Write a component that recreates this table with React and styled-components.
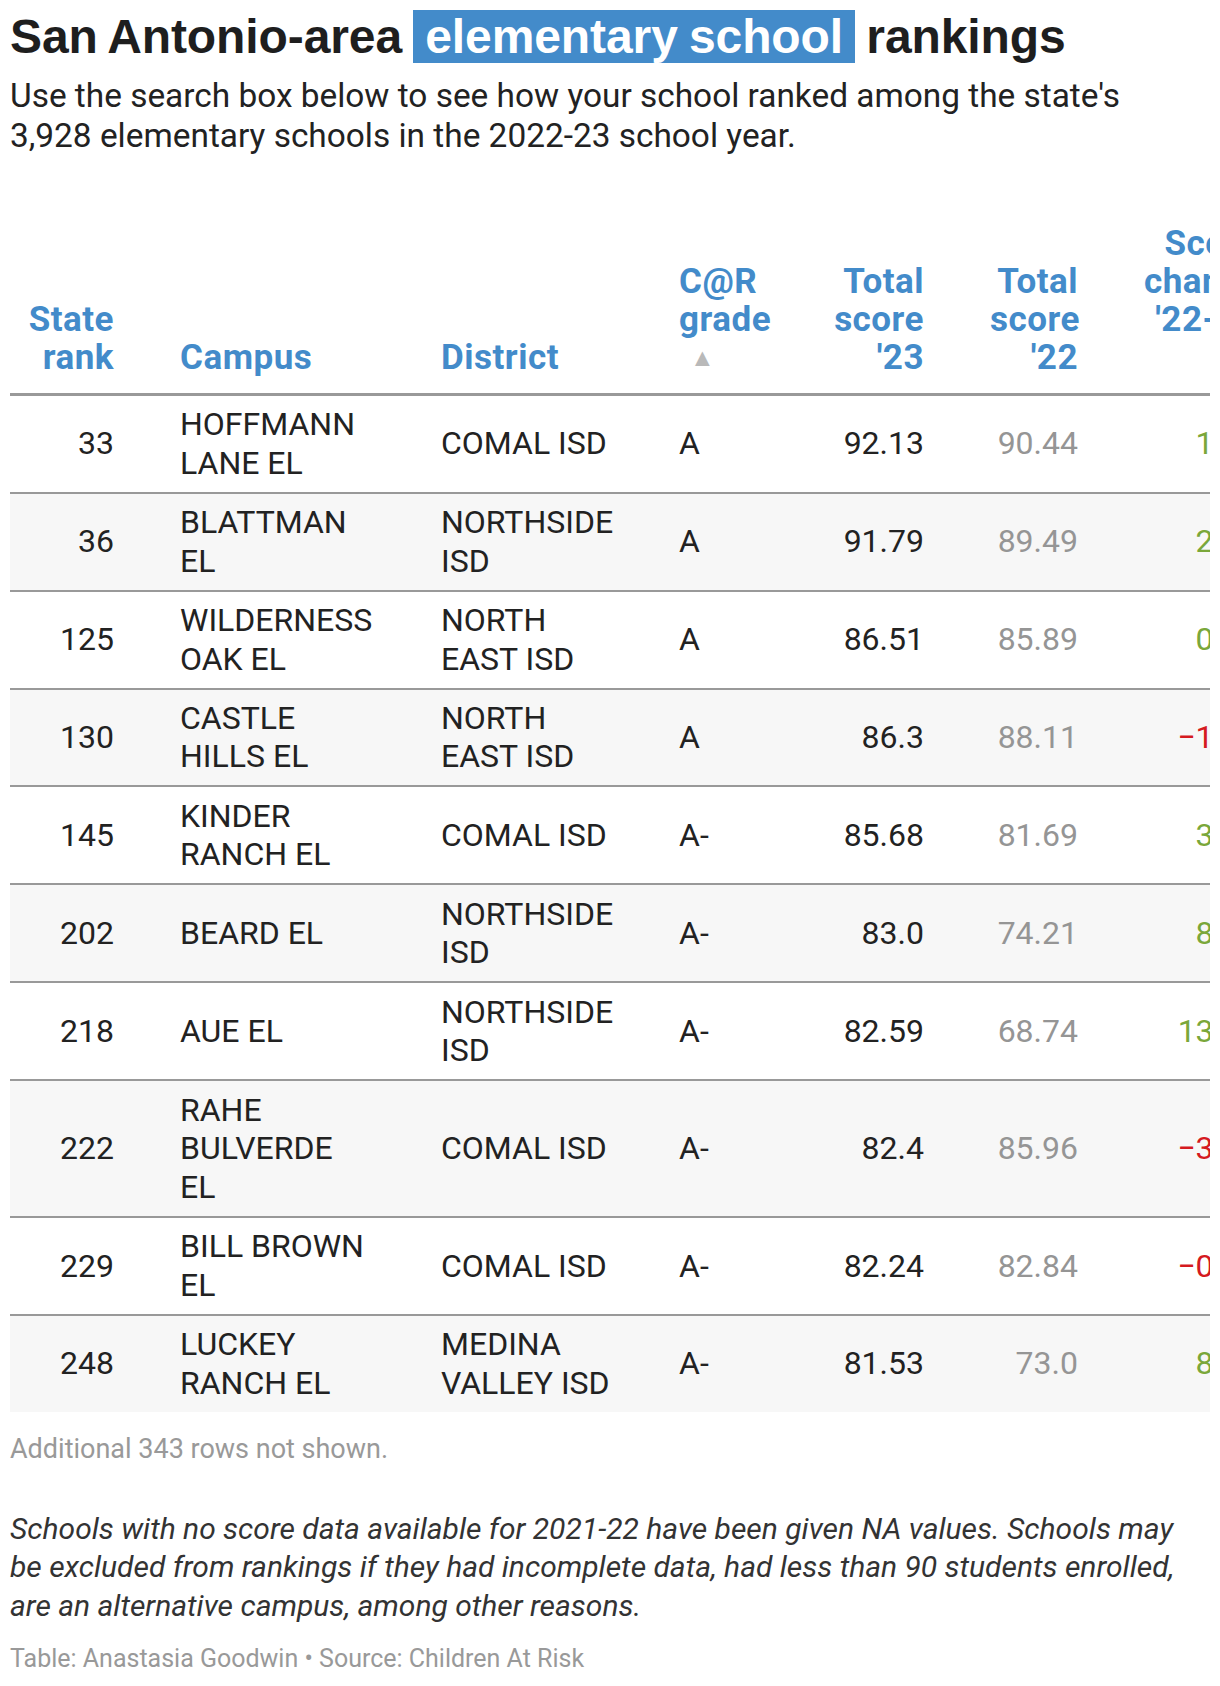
import styled, { createGlobalStyle } from "styled-components";

const GlobalStyle = createGlobalStyle`
  html, body {
    margin: 0;
    padding: 0;
    background: #fff;
  }
  body {
    font-family: Roboto, "Liberation Sans", sans-serif;
    color: #222;
  }
`;

const COLUMNS = [
  { key: "rank", label: "State\nrank", width: 137, align: "right" },
  { key: "campus", label: "Campus", width: 261, align: "left" },
  { key: "district", label: "District", width: 238, align: "left" },
  { key: "grade", label: "C@R\ngrade", width: 154, align: "left", sorted: true },
  { key: "score23", label: "Total\nscore\n'23", width: 157, align: "right" },
  { key: "score22", label: "Total\nscore\n'22", width: 154, align: "right" },
  { key: "change", label: "Score\nchange\n'22-23\n\u00a0", width: 180, align: "right" },
];

const ROWS = [
  { rank: 33, campus: "HOFFMANN\nLANE EL", district: "COMAL ISD", grade: "A", score23: "92.13", score22: "90.44", change: 1.69 },
  { rank: 36, campus: "BLATTMAN\nEL", district: "NORTHSIDE\nISD", grade: "A", score23: "91.79", score22: "89.49", change: 2.3 },
  { rank: 125, campus: "WILDERNESS\nOAK EL", district: "NORTH\nEAST ISD", grade: "A", score23: "86.51", score22: "85.89", change: 0.62 },
  { rank: 130, campus: "CASTLE\nHILLS EL", district: "NORTH\nEAST ISD", grade: "A", score23: "86.3", score22: "88.11", change: -1.81 },
  { rank: 145, campus: "KINDER\nRANCH EL", district: "COMAL ISD", grade: "A-", score23: "85.68", score22: "81.69", change: 3.99 },
  { rank: 202, campus: "BEARD EL", district: "NORTHSIDE\nISD", grade: "A-", score23: "83.0", score22: "74.21", change: 8.79 },
  { rank: 218, campus: "AUE EL", district: "NORTHSIDE\nISD", grade: "A-", score23: "82.59", score22: "68.74", change: 13.85 },
  { rank: 222, campus: "RAHE\nBULVERDE\nEL", district: "COMAL ISD", grade: "A-", score23: "82.4", score22: "85.96", change: -3.56 },
  { rank: 229, campus: "BILL BROWN\nEL", district: "COMAL ISD", grade: "A-", score23: "82.24", score22: "82.84", change: -0.6 },
  { rank: 248, campus: "LUCKEY\nRANCH EL", district: "MEDINA\nVALLEY ISD", grade: "A-", score23: "81.53", score22: "73.0", change: 8.53 },
];

const formatChange = (value) => {
  const text = Math.abs(value).toFixed(2);
  return value < 0 ? `\u2212${text}` : text;
};

function App() {
  return (
    <Page>
      <GlobalStyle />
      <Title>
        San Antonio-area <Highlight>elementary school</Highlight> rankings
      </Title>
      <Subtitle>
        Use the search box below to see how your school ranked among the state's
        <br />
        3,928 elementary schools in the 2022-23 school year.
      </Subtitle>

      <TableWrap>
        <Table>
          <colgroup>
            {COLUMNS.map((col) => (
              <col key={col.key} style={{ width: col.width }} />
            ))}
          </colgroup>
          <thead>
            <tr>
              {COLUMNS.map((col) => (
                <HeadCell key={col.key} $align={col.align}>
                  {col.label}
                  {col.sorted && <SortArrow>▲</SortArrow>}
                </HeadCell>
              ))}
            </tr>
          </thead>
          <tbody>
            {ROWS.map((row, i) => (
              <Row key={row.rank} $striped={i % 2 === 1}>
                <Cell $align="right">{row.rank}</Cell>
                <Cell>{row.campus}</Cell>
                <Cell>{row.district}</Cell>
                <Cell>{row.grade}</Cell>
                <Cell $align="right">{row.score23}</Cell>
                <Cell $align="right" $tone="muted">
                  {row.score22}
                </Cell>
                <Cell $align="right" $tone={row.change < 0 ? "down" : "up"}>
                  {formatChange(row.change)}
                </Cell>
              </Row>
            ))}
          </tbody>
        </Table>
      </TableWrap>

      <MoreRows>Additional 343 rows not shown.</MoreRows>
      <Note>
        Schools with no score data available for 2021-22 have been given NA values. Schools may
        <br />
        be excluded from rankings if they had incomplete data, had less than 90 students enrolled,
        <br />
        are an alternative campus, among other reasons.
      </Note>
      <Credit>Table: Anastasia Goodwin • Source: Children At Risk</Credit>
    </Page>
  );
}

export default App;

const TONES = {
  up: "#7aa73a",
  down: "#d51a1f",
  muted: "#959595",
};

const Page = styled.div`
  padding: 8px 10px 20px;
  width: 1200px;
`;

const Title = styled.h1`
  margin: 0;
  font-family: "Liberation Sans", Arial, sans-serif;
  font-weight: 700;
  font-size: 48px;
  line-height: 1.2;
  color: #1e1e1e;
  letter-spacing: -0.1px;
  word-spacing: -2px;
`;

const Highlight = styled.span`
  background: #438bca;
  color: #fff;
  padding: 0 12px;
`;

const Subtitle = styled.p`
  margin: 10px 0 0;
  font-size: 33.4px;
  line-height: 40px;
  color: #222;
`;

const TableWrap = styled.div`
  margin-top: 59px;
  width: 1200px;
  overflow: hidden;
`;

const Table = styled.table`
  table-layout: fixed;
  width: 1281px;
  border-collapse: collapse;
  font-size: 32px;
  line-height: 1.2;
`;

const HeadCell = styled.th`
  padding: 10px 33px 16px;
  vertical-align: bottom;
  text-align: ${({ $align }) => $align || "left"};
  white-space: pre-line;
  font-weight: 700;
  font-size: 35px;
  letter-spacing: 0.5px;
  line-height: 38px;
  color: #438bca;
  border-bottom: 3px solid #999;

  &:first-child {
    padding-left: 8px;
  }
`;

const SortArrow = styled.span`
  display: block;
  padding-left: 11px;
  font-size: 25px;
  line-height: 38px;
  color: #b9b9b9;
`;

const Row = styled.tr`
  background: ${({ $striped }) => ($striped ? "#f7f7f7" : "#fff")};

  & + & {
    border-top: 2px solid #999;
  }
`;

const Cell = styled.td`
  padding: 9.6px 33px;
  vertical-align: middle;
  text-align: ${({ $align }) => $align || "left"};
  white-space: pre-line;
  color: ${({ $tone }) => TONES[$tone] || "#222"};

  &:first-child {
    padding-left: 8px;
  }
`;

const MoreRows = styled.p`
  margin: 21px 0 0;
  font-size: 27px;
  line-height: 32px;
  color: #999;
`;

const Note = styled.p`
  margin: 45px 0 0;
  font-size: 30px;
  line-height: 38.5px;
  font-style: italic;
  color: #333;
`;

const Credit = styled.p`
  margin: 18px 0 0;
  font-size: 25px;
  line-height: 32px;
  color: #999;
`;
